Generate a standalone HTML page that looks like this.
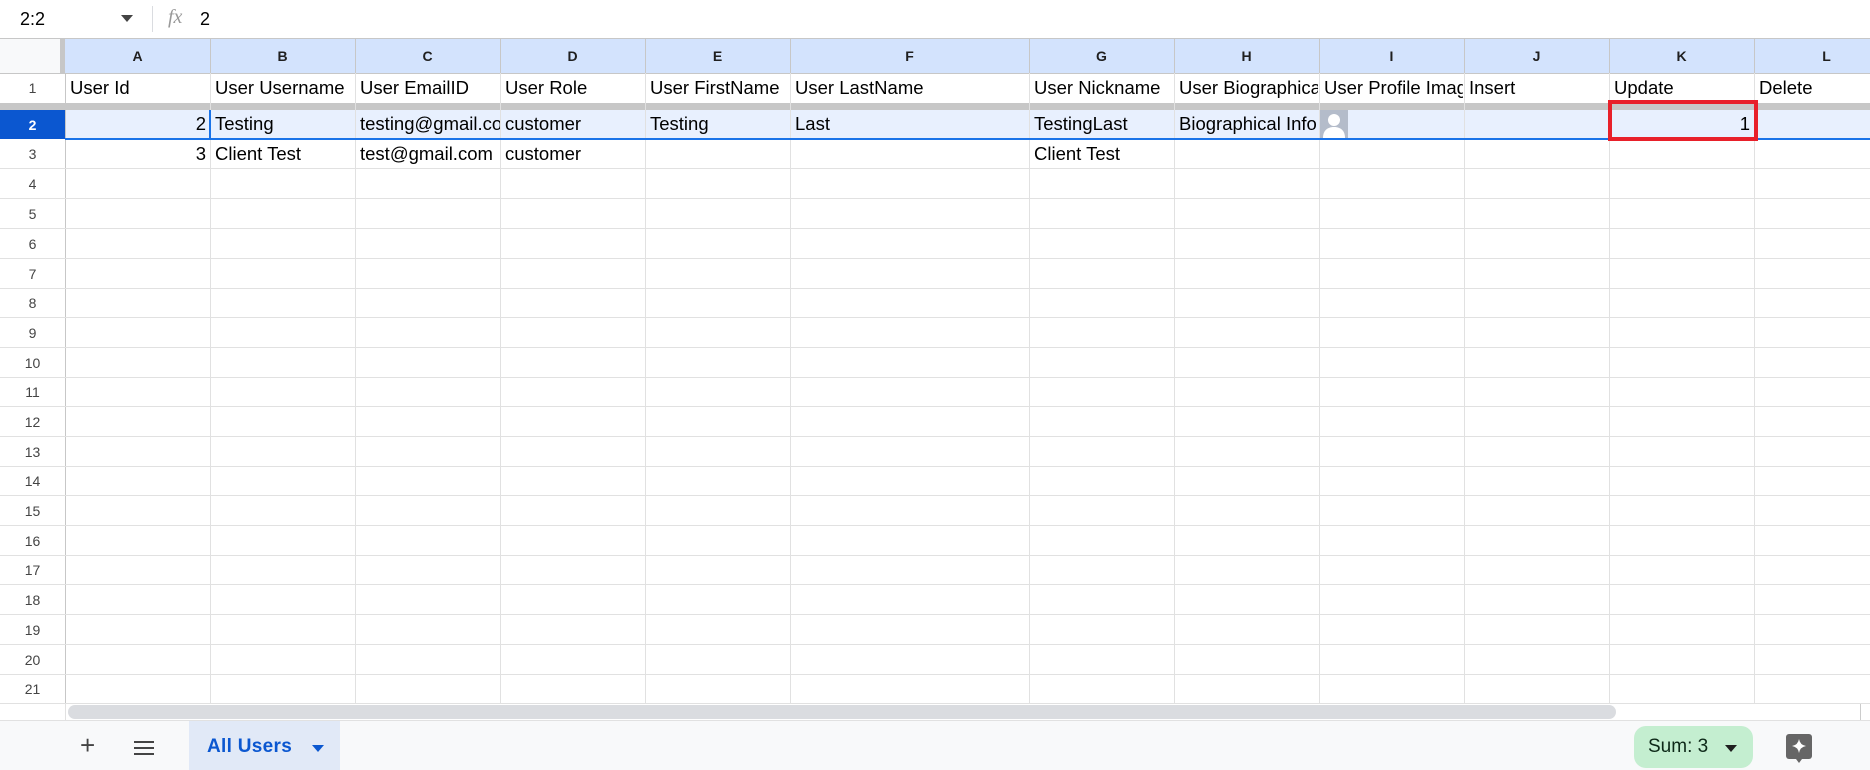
<!DOCTYPE html>
<html><head><meta charset="utf-8"><style>
*{margin:0;padding:0;box-sizing:border-box}
body{width:1870px;height:770px;overflow:hidden;background:#fff;font-family:"Liberation Sans",Arial,sans-serif;position:relative}
.a{position:absolute}
.t{position:absolute;font-size:18.5px;color:#000;white-space:nowrap;overflow:hidden;line-height:30px}
.vl{position:absolute;width:1px;background:#e1e1e1}
.hl{position:absolute;height:1px;background:#e1e1e1;left:0;width:1870px}
.ch{position:absolute;top:39px;height:34px;line-height:34px;text-align:center;font-size:14px;font-weight:bold;color:#1f1f1f}
.rn{position:absolute;left:0;width:65px;text-align:center;font-size:14px;color:#444;line-height:30px}
</style></head><body>
<!-- formula bar -->
<div class="a" style="left:20px;top:8px;font-size:18px;line-height:22px">2:2</div>
<svg class="a" style="left:121px;top:14px" width="12" height="8"><path d="M0 1h12L6 8z" fill="#444"/></svg>
<div class="a" style="left:152px;top:6px;width:1px;height:26px;background:#dadce0"></div>
<div class="a" style="left:168px;top:6px;font-size:20px;font-style:italic;font-family:'Liberation Serif',serif;color:#999">fx</div>
<div class="a" style="left:200px;top:8px;font-size:18px;line-height:22px">2</div>
<div class="a" style="left:0;top:38px;width:1870px;height:1px;background:#c7c7c7"></div>
<!-- header -->
<div class="a" style="left:0;top:39px;width:65px;height:34px;background:#f8f9fa"></div>
<div class="a" style="left:60px;top:39px;width:5px;height:34px;background:#c7c7c7"></div>
<div class="a" style="left:65px;top:39px;width:1805px;height:34px;background:#d3e3fd"></div>
<div class="a" style="left:0;top:73px;width:1870px;height:1px;background:#c7c7c7"></div>
<!-- row2 highlight -->
<div class="a" style="left:65px;top:110px;width:1805px;height:29px;background:#e8f0fe"></div>
<div class="a" style="left:0;top:110px;width:65px;height:29px;background:#0b57d0"></div>
<!-- freeze bar -->
<div class="a" style="left:0;top:103px;width:1870px;height:7px;background:#c7c7c7"></div>
<!-- vertical lines -->
<div class="vl" style="left:65px;top:73px;height:631px;background:#c7c7c7"></div>
<div class="vl" style="left:210px;top:39px;height:665px"></div>
<div class="vl" style="left:355px;top:39px;height:665px"></div>
<div class="vl" style="left:500px;top:39px;height:665px"></div>
<div class="vl" style="left:645px;top:39px;height:665px"></div>
<div class="vl" style="left:790px;top:39px;height:665px"></div>
<div class="vl" style="left:1029px;top:39px;height:665px"></div>
<div class="vl" style="left:1174px;top:39px;height:665px"></div>
<div class="vl" style="left:1319px;top:39px;height:665px"></div>
<div class="vl" style="left:1464px;top:39px;height:665px"></div>
<div class="vl" style="left:1609px;top:39px;height:665px"></div>
<div class="vl" style="left:1754px;top:39px;height:665px"></div>
<!-- column header lines over blue -->
<div class="a" style="left:210px;top:39px;width:1px;height:34px;background:#c7c7c7"></div>
<div class="a" style="left:355px;top:39px;width:1px;height:34px;background:#c7c7c7"></div>
<div class="a" style="left:500px;top:39px;width:1px;height:34px;background:#c7c7c7"></div>
<div class="a" style="left:645px;top:39px;width:1px;height:34px;background:#c7c7c7"></div>
<div class="a" style="left:790px;top:39px;width:1px;height:34px;background:#c7c7c7"></div>
<div class="a" style="left:1029px;top:39px;width:1px;height:34px;background:#c7c7c7"></div>
<div class="a" style="left:1174px;top:39px;width:1px;height:34px;background:#c7c7c7"></div>
<div class="a" style="left:1319px;top:39px;width:1px;height:34px;background:#c7c7c7"></div>
<div class="a" style="left:1464px;top:39px;width:1px;height:34px;background:#c7c7c7"></div>
<div class="a" style="left:1609px;top:39px;width:1px;height:34px;background:#c7c7c7"></div>
<div class="a" style="left:1754px;top:39px;width:1px;height:34px;background:#c7c7c7"></div>
<div class="ch" style="left:65px;width:145px">A</div>
<div class="ch" style="left:210px;width:145px">B</div>
<div class="ch" style="left:355px;width:145px">C</div>
<div class="ch" style="left:500px;width:145px">D</div>
<div class="ch" style="left:645px;width:145px">E</div>
<div class="ch" style="left:790px;width:239px">F</div>
<div class="ch" style="left:1029px;width:145px">G</div>
<div class="ch" style="left:1174px;width:145px">H</div>
<div class="ch" style="left:1319px;width:145px">I</div>
<div class="ch" style="left:1464px;width:145px">J</div>
<div class="ch" style="left:1609px;width:145px">K</div>
<div class="ch" style="left:1754px;width:145px">L</div>
<!-- horizontal lines -->
<div class="hl" style="top:168px"></div><div class="hl" style="top:198px"></div><div class="hl" style="top:228px"></div>
<div class="hl" style="top:258px"></div><div class="hl" style="top:288px"></div><div class="hl" style="top:317px"></div>
<div class="hl" style="top:347px"></div><div class="hl" style="top:377px"></div><div class="hl" style="top:406px"></div>
<div class="hl" style="top:436px"></div><div class="hl" style="top:466px"></div><div class="hl" style="top:495px"></div>
<div class="hl" style="top:525px"></div><div class="hl" style="top:555px"></div><div class="hl" style="top:584px"></div>
<div class="hl" style="top:614px"></div><div class="hl" style="top:644px"></div><div class="hl" style="top:674px"></div>
<div class="hl" style="top:703px"></div>
<!-- row numbers -->
<div class="rn" style="top:73px">1</div>
<div class="rn" style="top:110px;color:#fff;font-weight:bold">2</div>
<div class="rn" style="top:139px">3</div>
<div class="rn" style="top:169px">4</div><div class="rn" style="top:199px">5</div><div class="rn" style="top:229px">6</div>
<div class="rn" style="top:259px">7</div><div class="rn" style="top:288px">8</div><div class="rn" style="top:318px">9</div>
<div class="rn" style="top:348px">10</div><div class="rn" style="top:377px">11</div><div class="rn" style="top:407px">12</div>
<div class="rn" style="top:437px">13</div><div class="rn" style="top:466px">14</div><div class="rn" style="top:496px">15</div>
<div class="rn" style="top:526px">16</div><div class="rn" style="top:555px">17</div><div class="rn" style="top:585px">18</div>
<div class="rn" style="top:615px">19</div><div class="rn" style="top:645px">20</div><div class="rn" style="top:674px">21</div>
<!-- row 1 -->
<div class="t" style="left:70px;top:73px;width:138px">User Id</div>
<div class="t" style="left:215px;top:73px;width:139px">User Username</div>
<div class="t" style="left:360px;top:73px;width:139px">User EmailID</div>
<div class="t" style="left:505px;top:73px;width:139px">User Role</div>
<div class="t" style="left:650px;top:73px;width:139px">User FirstName</div>
<div class="t" style="left:795px;top:73px;width:233px">User LastName</div>
<div class="t" style="left:1034px;top:73px;width:139px">User Nickname</div>
<div class="t" style="left:1179px;top:73px;width:139px">User Biographical Info</div>
<div class="t" style="left:1324px;top:73px;width:139px">User Profile Image</div>
<div class="t" style="left:1469px;top:73px;width:139px">Insert</div>
<div class="t" style="left:1614px;top:73px;width:139px">Update</div>
<div class="t" style="left:1759px;top:73px;width:110px">Delete</div>
<!-- row 2 -->
<div class="t" style="left:66px;top:109px;width:140px;text-align:right">2</div>
<div class="t" style="left:215px;top:109px;width:139px">Testing</div>
<div class="t" style="left:360px;top:109px;width:140px">testing@gmail.com</div>
<div class="t" style="left:505px;top:109px;width:139px">customer</div>
<div class="t" style="left:650px;top:109px;width:139px">Testing</div>
<div class="t" style="left:795px;top:109px;width:233px">Last</div>
<div class="t" style="left:1034px;top:109px;width:139px">TestingLast</div>
<div class="t" style="left:1179px;top:109px;width:140px">Biographical Info</div>
<div class="a" style="left:1320px;top:110px;width:28px;height:28px;background:#b4bcca;overflow:hidden">
<svg width="28" height="28"><circle cx="14" cy="10" r="6" fill="#fff"/><path d="M3 28c0-8 5-11 11-11s11 3 11 11z" fill="#fff"/></svg></div>
<div class="t" style="left:1610px;top:109px;width:140px;text-align:right">1</div>
<div class="a" style="left:209px;top:110px;width:2px;height:29px;background:#1a73e8"></div>
<div class="a" style="left:65px;top:138px;width:1805px;height:2px;background:#1a73e8"></div>
<!-- row 3 -->
<div class="t" style="left:66px;top:139px;width:140px;text-align:right">3</div>
<div class="t" style="left:215px;top:139px;width:139px">Client Test</div>
<div class="t" style="left:360px;top:139px;width:139px">test@gmail.com</div>
<div class="t" style="left:505px;top:139px;width:139px">customer</div>
<div class="t" style="left:1034px;top:139px;width:139px">Client Test</div>
<!-- red box -->
<div class="a" style="left:1608px;top:100px;width:150px;height:41px;border:4px solid #e8202a"></div>
<!-- scrollbar -->
<div class="a" style="left:0;top:704px;width:1870px;height:17px;background:#fff"></div>
<div class="a" style="left:65px;top:704px;width:1px;height:17px;background:#e1e1e1"></div>
<div class="a" style="left:68px;top:705px;width:1548px;height:14px;border-radius:7px;background:#dadce0"></div>
<div class="a" style="left:1860px;top:704px;width:1px;height:17px;background:#ccc"></div>
<div class="a" style="left:0;top:720px;width:1870px;height:1px;background:#e1e1e1"></div>
<!-- bottom bar -->
<div class="a" style="left:0;top:721px;width:1870px;height:49px;background:#f8f9fa"></div>
<div class="a" style="left:80px;top:735px;font-size:26px;color:#444;line-height:20px">+</div>
<div class="a" style="left:134px;top:741px;width:20px;height:2px;background:#444;box-shadow:0 6px 0 #444,0 12px 0 #444"></div>
<div class="a" style="left:189px;top:721px;width:151px;height:49px;background:#e1e9f7"></div>
<div class="a" style="left:207px;top:736px;font-size:19px;color:#0b57d0;font-weight:bold;line-height:22px;letter-spacing:.3px">All Users</div>
<svg class="a" style="left:312px;top:745px" width="12" height="7"><path d="M0 0h12L6 7z" fill="#0b57d0"/></svg>
<div class="a" style="left:1634px;top:726px;width:119px;height:42px;border-radius:12px;background:#c4eed0"></div>
<div class="a" style="left:1648px;top:736px;font-size:19px;color:#0d2818;line-height:22px">Sum: 3</div>
<svg class="a" style="left:1725px;top:745px" width="12" height="7"><path d="M0 0h12L6 7z" fill="#1f1f1f"/></svg>
<svg class="a" style="left:1786px;top:734px" width="26" height="29"><rect x="0" y="0" width="26" height="25" rx="3" fill="#666"/><path d="M10 25h6l-3 4z" fill="#666"/><path d="M13 5q1 6 7 7q-6 1-7 7q-1-6-7-7q6-1 7-7z" fill="#fff"/></svg>
</body></html>
